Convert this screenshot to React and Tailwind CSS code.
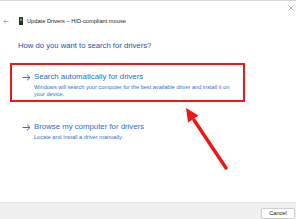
// Update Drivers dialog with highlighted option

function LinkArrow() {
  return (
    <svg width="9" height="7" viewBox="0 0 9 7" className="shrink-0">
      <path d="M0.5 3.5H8M5 0.7L8 3.5L5 6.3" fill="none" stroke="#2d6fd2" strokeWidth="1" />
    </svg>
  )
}

function Option({ title, children }) {
  return (
    <div className="flex flex-col">
      <div className="flex items-center h-[12px] gap-[3px]">
        <LinkArrow />
        <span className="text-[7.8px] leading-[12px] text-[#2a6ccf] whitespace-nowrap">{title}</span>
      </div>
      <div className="pl-[12px] text-[5.6px] leading-[6.5px] text-[#2f74d4] mt-[1px] whitespace-nowrap">{children}</div>
    </div>
  )
}

export default function App() {
  return (
    <div className="relative w-[296px] h-[219px] bg-white border-t border-[#d6d6d6] flex flex-col overflow-hidden font-['Liberation_Sans',sans-serif]">
      {/* barra de titulo */}
      <div className="flex justify-end h-[13px] pr-[2px] items-center">
        <svg width="6" height="6" viewBox="0 0 6 6">
          <path d="M0.5 0.5L5.5 5.5M5.5 0.5L0.5 5.5" stroke="#9a9a9a" strokeWidth="0.8" />
        </svg>
      </div>
      <div className="flex items-center h-[14px] pl-[3px]">
        <svg width="6" height="5" viewBox="0 0 6 5">
          <path d="M5.5 2.5H0.8M2.8 0.5L0.8 2.5L2.8 4.5" fill="none" stroke="#a0a0a0" strokeWidth="0.8" />
        </svg>
        <svg width="4" height="8" viewBox="0 0 4 8" className="ml-[10px]">
          <rect x="0" y="0" width="4" height="8" rx="0.6" fill="#2a2a2a" />
          <rect x="1" y="1.5" width="2" height="2.5" fill="#3fc03f" />
        </svg>
        <span className="ml-[4px] text-[5.7px] leading-[8px] text-[#222] whitespace-nowrap">
          Update Drivers – HID-compliant mouse
        </span>
      </div>

      <h1 className="ml-[18px] mt-[12px] text-[7.7px] leading-[12px] text-[#1f4fb0] whitespace-nowrap">
        How do you want to search for drivers?
      </h1>

      {/* opcion resaltada */}
      <div className="ml-[10px] mt-[11px] w-[235px] h-[39px] border-2 border-[#f01616] pt-[6px] pl-[10px]">
        <Option title="Search automatically for drivers">
          Windows will search your computer for the best available driver and install it on
          <br />
          your device.
        </Option>
      </div>

      <div className="ml-[22px] mt-[19px]">
        <Option title="Browse my computer for drivers">Locate and install a driver manually.</Option>
      </div>

      <div className="mt-auto h-[17px] bg-[#f0f0f0] border-t border-[#e6e6e6] flex justify-end items-start pt-[5px] pr-[1px]">
        <button className="w-[34px] h-[11px] bg-white border border-[#cfcfcf] rounded-[1px] text-[5.6px] leading-[9px] text-[#222]">
          Cancel
        </button>
      </div>

      {/* flecha roja */}
      <svg className="absolute left-0 top-0 pointer-events-none" width="296" height="219" viewBox="0 0 296 219">
        <path d="M226 167L194 119" stroke="#f01616" strokeWidth="3.5" strokeLinecap="round" />
        <path d="M186 107L198.5 114.5L188 121.5Z" fill="#f01616" />
      </svg>
    </div>
  )
}
